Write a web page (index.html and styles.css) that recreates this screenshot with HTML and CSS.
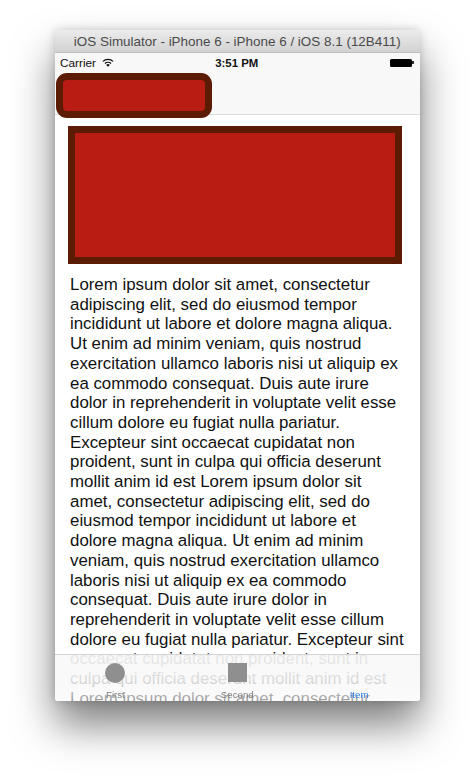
FILE: index.html
```html
<!DOCTYPE html>
<html lang="en">
<head>
<meta charset="utf-8">
<title>iOS Simulator</title>
<link rel="stylesheet" href="styles.css">
</head>
<body>
<main class="window">
  <header class="titlebar">iOS Simulator - iPhone 6 - iPhone 6 / iOS 8.1 (12B411)</header>
  <section class="screen">
    <div class="chrome">
      <div class="status">
        <div class="status-left">
          <span>Carrier</span>
          <svg class="wifi" viewBox="0 0 12 9" aria-hidden="true">
            <path d="M6 8.8 4.2 6.9a2.6 2.6 0 0 1 3.6 0Z" fill="#111"/>
            <path d="M2.9 5.5a4.5 4.5 0 0 1 6.2 0" fill="none" stroke="#111" stroke-width="1.2"/>
            <path d="M.9 3.4a7.4 7.4 0 0 1 10.2 0" fill="none" stroke="#111" stroke-width="1.2"/>
          </svg>
        </div>
        <div class="status-time">3:51 PM</div>
        <div class="status-right">
          <span class="battery"></span><span class="battery-tip"></span>
        </div>
      </div>
      <div class="nav">
        <div class="nav-button"></div>
      </div>
    </div>
    <div class="content">
      <div class="banner"></div>
      <p class="lorem">Lorem ipsum dolor sit amet, consectetur<br>adipiscing elit, sed do eiusmod tempor<br>incididunt ut labore et dolore magna aliqua.<br>Ut enim ad minim veniam, quis nostrud<br>exercitation ullamco laboris nisi ut aliquip ex<br>ea commodo consequat. Duis aute irure<br>dolor in reprehenderit in voluptate velit esse<br>cillum dolore eu fugiat nulla pariatur.<br>Excepteur sint occaecat cupidatat non<br>proident, sunt in culpa qui officia deserunt<br>mollit anim id est Lorem ipsum dolor sit<br>amet, consectetur adipiscing elit, sed do<br>eiusmod tempor incididunt ut labore et<br>dolore magna aliqua. Ut enim ad minim<br>veniam, quis nostrud exercitation ullamco<br>laboris nisi ut aliquip ex ea commodo<br>consequat. Duis aute irure dolor in<br>reprehenderit in voluptate velit esse cillum<br>dolore eu fugiat nulla pariatur. Excepteur sint<br>occaecat cupidatat non proident, sunt in<br>culpa qui officia deserunt mollit anim id est<br>Lorem ipsum dolor sit amet, consectetur</p>
    </div>
    <nav class="tabbar">
      <div class="tab"><span class="tab-icon circle"></span><span class="tab-label">First</span></div>
      <div class="tab"><span class="tab-icon square"></span><span class="tab-label">Second</span></div>
      <div class="tab active"><span class="tab-label">Item</span></div>
    </nav>
  </section>
</main>
</body>
</html>
```

FILE: styles.css
```css
* { box-sizing: border-box; }

html, body {
  margin: 0;
  height: 779px;
  overflow: hidden;
  background: #fff;
}

body {
  padding: 30px 0 0 54.5px;
  font-family: "Liberation Sans", Arial, sans-serif;
}

.window {
  width: 365.5px;
  height: 671px;
  display: flex;
  flex-direction: column;
  border-radius: 5px 5px 3px 3px;
  box-shadow: 0 24px 40px rgba(0, 0, 0, .5), 0 0 10px rgba(0, 0, 0, .18);
}

.titlebar {
  height: 23px;
  flex: none;
  text-align: center;
  line-height: 24px;
  font-size: 13.45px;
  color: #4a4a4a;
  white-space: nowrap;
  background: linear-gradient(#ececec, #d2d2d2);
  border-radius: 5px 5px 0 0;
  border-bottom: 1px solid #bdbdbd;
}

.screen {
  position: relative;
  flex: 1;
  overflow: hidden;
  background: #fff;
  border-radius: 0 0 3px 3px;
}

.chrome {
  position: relative;
  z-index: 1;
  height: 61px;
  background: #f8f8f8;
  box-shadow: 0 1px 0 #dcdfdc;
}

.status {
  height: 19px;
  padding: 0 6.5px 0 5.5px;
  display: grid;
  grid-template-columns: 1fr auto 1fr;
  align-items: center;
  font-size: 11.8px;
  color: #111;
}

.status-left {
  display: flex;
  align-items: center;
  gap: 6px;
}

.wifi {
  width: 12px;
  height: 9px;
}

.status-time {
  font-weight: 700;
  font-size: 11.4px;
}

.status-right {
  display: flex;
  justify-content: flex-end;
  align-items: center;
}

.battery {
  width: 22px;
  height: 8px;
  background: #000;
  border-radius: 1.5px;
}

.battery-tip {
  width: 1.5px;
  height: 3px;
  background: #333;
}

.nav {
  padding-left: 1.5px;
}

.nav-button {
  width: 156px;
  height: 45px;
  margin-top: 1px;
  background: #b81c13;
  border: 7px solid #5b1b05;
  border-radius: 11px;
}

.content {
  padding: 12px 18px 0 13.5px;
}

.banner {
  height: 138px;
  background: #b81c13;
  border: 7px solid #5b1b05;
}

.lorem {
  margin: 11px 0 0 2px;
  font-size: 16.88px;
  line-height: 19.7px;
  color: #111;
  white-space: nowrap;
}

.tabbar {
  position: absolute;
  left: 0;
  right: 0;
  bottom: 0;
  height: 47px;
  z-index: 2;
  display: grid;
  grid-template-columns: repeat(3, 1fr);
  background: linear-gradient(rgba(248, 248, 248, .93), rgba(248, 248, 248, .87) 55%, rgba(248, 248, 248, .6));
  backdrop-filter: blur(.6px);
  border-top: 1px solid #d4d4d4;
}

.tab {
  position: relative;
  display: flex;
  flex-direction: column;
  align-items: center;
  color: #7d7d7d;
}

.tab.active {
  color: #2f7fe0;
}

.tab-icon {
  margin-top: 8px;
  background: #8f8f8f;
}

.tab-icon.circle {
  width: 20px;
  height: 20px;
  border-radius: 50%;
}

.tab-icon.square {
  width: 19px;
  height: 19px;
}

.tab-label {
  position: absolute;
  bottom: 0;
  font-size: 9.7px;
  line-height: 12px;
}
```
